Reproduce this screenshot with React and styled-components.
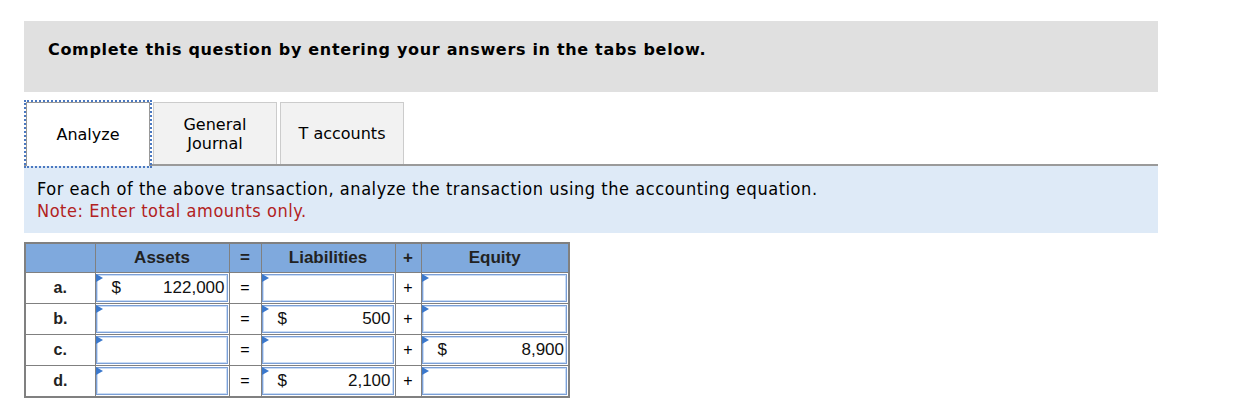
import React from 'react';
import styled, { createGlobalStyle } from 'styled-components';

const GlobalStyle = createGlobalStyle`
  body {
    margin: 0;
    background: #fff;
    font-family: "DejaVu Sans", Verdana, sans-serif;
    color: #000;
  }
`;

const Page = styled.div`
  padding: 21px 24px;
  width: 1134px;
`;

const QuestionHeader = styled.div`
  background: #e0e0e0;
  height: 71px;
  box-sizing: border-box;
  padding: 19px 24px 0;
  font-size: 16px;
  letter-spacing: 0.68px;
  font-weight: bold;
`;

const TabBar = styled.div`
  display: flex;
  align-items: flex-end;
  gap: 3px;
  margin-top: 9px;
  border-bottom: 2px solid #9a9a9a;
  height: 63px;
  padding-left: 2px;
`;

const Tab = styled.div`
  width: 124px;
  box-sizing: border-box;
  display: flex;
  align-items: center;
  justify-content: center;
  text-align: center;
  font-size: 16px;
  line-height: 19px;
  border: 1px solid ${p => (p.$active ? '#999' : '#ccc')};
  border-bottom: none;
  background: ${p => (p.$active ? '#fff' : '#f2f2f2')};
  margin-bottom: ${p => (p.$active ? '-2px' : '0')};
  height: ${p => (p.$active ? '64px' : '62px')};
  outline: ${p => (p.$active ? '2px dotted #4a78c0' : 'none')};
`;

const Instructions = styled.div`
  background: #deeaf7;
  height: 67px;
  box-sizing: border-box;
  padding: 12px 13px;
  font-size: 18px;
  font-stretch: condensed;
  line-height: 22px;
  letter-spacing: 0.55px;
`;

const Note = styled.div`
  color: #b22222;
`;

const Table = styled.table`
  margin-top: 9px;
  width: 544px;
  table-layout: fixed;
  border-collapse: collapse;
  font-family: "Liberation Sans", Arial, sans-serif;
  border: 2px solid #808080;
`;

const HeadCell = styled.th`
  background: #7fa9dd;
  border: 1px solid #808080;
  height: 28px;
  padding: 0;
  font-size: 17px;
  font-weight: bold;
  color: #222;
  text-align: center;
`;

const LabelCell = styled.td`
  border: 1px solid #808080;
  height: 30px;
  padding: 0;
  font-size: 16px;
  font-weight: bold;
  color: #222;
  text-align: center;
`;

const SignCell = styled.td`
  border: 1px solid #808080;
  padding: 0;
  font-size: 16px;
  text-align: center;
`;

const InputCell = styled.td`
  border: 1px solid #808080;
  padding: 1px 1px 1px 0;
`;

const InputBox = styled.div`
  position: relative;
  display: flex;
  align-items: center;
  justify-content: space-between;
  height: 28px;
  box-sizing: border-box;
  border: 1px solid #7b9fd6;
  box-shadow: inset 0 0 0 1px #cadcf4;
  padding: 0 2px 0 15px;
  font-size: 17px;
  color: #111;
  &::before {
    content: '';
    position: absolute;
    left: -1px;
    top: -1px;
    border-left: 7px solid #3b78cc;
    border-top: 4px solid transparent;
    border-bottom: 4px solid transparent;
  }
`;

const rows = [
  { label: 'a.', assets: '122,000', liab: '', equity: '' },
  { label: 'b.', assets: '', liab: '500', equity: '' },
  { label: 'c.', assets: '', liab: '', equity: '8,900' },
  { label: 'd.', assets: '', liab: '2,100', equity: '' },
];

const Entry = ({ value }) => (
  <InputBox>
    <span>{value ? '$' : ''}</span>
    <span>{value}</span>
  </InputBox>
);

export default function App() {
  return (
    <Page>
      <GlobalStyle />
      <QuestionHeader>Complete this question by entering your answers in the tabs below.</QuestionHeader>
      <TabBar>
        <Tab $active>Analyze</Tab>
        <Tab>General<br />Journal</Tab>
        <Tab>T accounts</Tab>
      </TabBar>
      <Instructions>
        For each of the above transaction, analyze the transaction using the accounting equation.
        <Note>Note: Enter total amounts only.</Note>
      </Instructions>
      <Table>
        <colgroup>
          <col style={{ width: 70 }} />
          <col style={{ width: 134 }} />
          <col style={{ width: 32 }} />
          <col style={{ width: 134 }} />
          <col style={{ width: 26 }} />
          <col style={{ width: 148 }} />
        </colgroup>
        <thead>
          <tr>
            <HeadCell></HeadCell>
            <HeadCell>Assets</HeadCell>
            <HeadCell>=</HeadCell>
            <HeadCell>Liabilities</HeadCell>
            <HeadCell>+</HeadCell>
            <HeadCell>Equity</HeadCell>
          </tr>
        </thead>
        <tbody>
          {rows.map(r => (
            <tr key={r.label}>
              <LabelCell>{r.label}</LabelCell>
              <InputCell><Entry value={r.assets} /></InputCell>
              <SignCell>=</SignCell>
              <InputCell><Entry value={r.liab} /></InputCell>
              <SignCell>+</SignCell>
              <InputCell><Entry value={r.equity} /></InputCell>
            </tr>
          ))}
        </tbody>
      </Table>
    </Page>
  );
}
